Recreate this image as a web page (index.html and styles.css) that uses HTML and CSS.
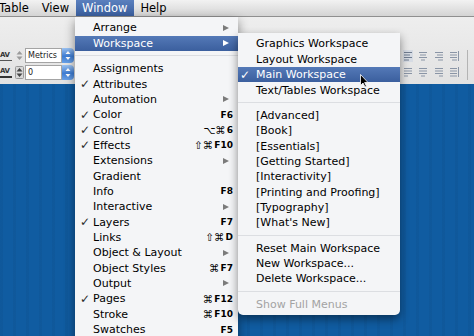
FILE: index.html
```html
<!DOCTYPE html>
<html>
<head>
<meta charset="utf-8">
<link rel="stylesheet" href="styles.css">
</head>
<body>
<div class="screen">
  <div class="menubar">
    <span class="mb-item first">Table</span>
    <span class="mb-item">View</span>
    <span class="mb-item active">Window</span>
    <span class="mb-item">Help</span>
  </div>
  <div class="toolbar">
    <div class="tb-left">
      <div class="tb-row">
        <span class="ico kern">AV</span>
        <svg class="stepper" width="9" height="13" viewBox="0 0 9 13"><path d="M4.5 2 L7.5 5.5 H1.5Z M4.5 11 L7.5 7.5 H1.5Z" fill="#9a9a9a"/></svg>
        <span class="field">Metrics</span>
        <span class="popbtn"><svg width="12" height="15" viewBox="0 0 12 15"><path d="M6 3 L8.5 6 H3.5Z M6 12 L8.5 9 H3.5Z" fill="#fff"/></svg></span>
      </div>
      <div class="tb-row">
        <span class="ico track">AV</span>
        <svg class="stepper dark" width="9" height="13" viewBox="0 0 9 13"><rect x="0.5" y="0.5" width="8" height="12" rx="1" fill="#d8d8d8" stroke="#999"/><path d="M4.5 2 L7.5 5.5 H1.5Z M4.5 11 L7.5 7.5 H1.5Z" fill="#444"/></svg>
        <span class="field">0</span>
        <span class="popbtn"><svg width="12" height="15" viewBox="0 0 12 15"><path d="M6 3 L8.5 6 H3.5Z M6 12 L8.5 9 H3.5Z" fill="#fff"/></svg></span>
      </div>
    </div>
    <div class="tb-right">
      <div class="align-grid">
        <svg viewBox="0 0 10 12"><rect x="0" y="0" width="10" height="12" fill="#d6dbe3"/><path d="M1 2.5H9M1 5H7M1 7.5H9M1 10H6" stroke="#6f7c90"/></svg>
        <svg viewBox="0 0 10 12"><path d="M1 2.5H9M2 5H8M1 7.5H9M3 10H7" stroke="#8a95a6"/></svg>
        <svg viewBox="0 0 10 12"><path d="M1 2.5H9M3 5H9M1 7.5H9M4 10H9" stroke="#8a95a6"/></svg>
        <svg viewBox="0 0 10 12"><path d="M1 2.5H8M1 5H8M1 7.5H8M3 10H8M9.5 1V11" stroke="#8a95a6"/></svg>
        <svg viewBox="0 0 10 12"><path d="M1 2.5H9M1 5H9M1 7.5H9M1 10H5" stroke="#8a95a6"/></svg>
        <svg viewBox="0 0 10 12"><path d="M1 2.5H9M1 5H9M1 7.5H9M3 10H7" stroke="#8a95a6"/></svg>
        <svg viewBox="0 0 10 12"><path d="M1 2.5H9M1 5H9M1 7.5H9M5 10H9" stroke="#8a95a6"/></svg>
        <svg viewBox="0 0 10 12"><path d="M1 2.5H8M1 5H8M1 7.5H8M1 10H8M9.5 1V11" stroke="#8a95a6"/></svg>
      </div>
      <span class="vsep"></span>
    </div>
  </div>
  <div class="desktop"></div>

  <div class="menu window-menu">
    <div class="mi"><span class="chk"></span><span class="lbl">Arrange</span><span class="arr"></span></div>
    <div class="mi hl"><span class="chk"></span><span class="lbl">Workspace</span><span class="arr"></span></div>
    <div class="sep"></div>
    <div class="mi"><span class="chk"></span><span class="lbl">Assignments</span></div>
    <div class="mi"><span class="chk">✓</span><span class="lbl">Attributes</span></div>
    <div class="mi"><span class="chk"></span><span class="lbl">Automation</span><span class="arr"></span></div>
    <div class="mi"><span class="chk">✓</span><span class="lbl">Color</span><span class="sc">F6</span></div>
    <div class="mi"><span class="chk">✓</span><span class="lbl">Control</span><span class="sc"><span class="mod">⌥⌘</span>6</span></div>
    <div class="mi"><span class="chk">✓</span><span class="lbl">Effects</span><span class="sc"><span class="mod">⇧⌘</span>F10</span></div>
    <div class="mi"><span class="chk"></span><span class="lbl">Extensions</span><span class="arr"></span></div>
    <div class="mi"><span class="chk"></span><span class="lbl">Gradient</span></div>
    <div class="mi"><span class="chk"></span><span class="lbl">Info</span><span class="sc">F8</span></div>
    <div class="mi"><span class="chk"></span><span class="lbl">Interactive</span><span class="arr"></span></div>
    <div class="mi"><span class="chk">✓</span><span class="lbl">Layers</span><span class="sc">F7</span></div>
    <div class="mi"><span class="chk"></span><span class="lbl">Links</span><span class="sc"><span class="mod">⇧⌘</span>D</span></div>
    <div class="mi"><span class="chk"></span><span class="lbl">Object &amp; Layout</span><span class="arr"></span></div>
    <div class="mi"><span class="chk"></span><span class="lbl">Object Styles</span><span class="sc"><span class="mod">⌘</span>F7</span></div>
    <div class="mi"><span class="chk"></span><span class="lbl">Output</span><span class="arr"></span></div>
    <div class="mi"><span class="chk">✓</span><span class="lbl">Pages</span><span class="sc"><span class="mod">⌘</span>F12</span></div>
    <div class="mi"><span class="chk"></span><span class="lbl">Stroke</span><span class="sc"><span class="mod">⌘</span>F10</span></div>
    <div class="mi"><span class="chk"></span><span class="lbl">Swatches</span><span class="sc">F5</span></div>
  </div>

  <div class="menu sub-menu">
    <div class="mi"><span class="chk"></span><span class="lbl">Graphics Workspace</span></div>
    <div class="mi"><span class="chk"></span><span class="lbl">Layout Workspace</span></div>
    <div class="mi hl"><span class="chk">✓</span><span class="lbl">Main Workspace</span></div>
    <div class="mi"><span class="chk"></span><span class="lbl">Text/Tables Workspace</span></div>
    <div class="sep"></div>
    <div class="mi"><span class="chk"></span><span class="lbl">[Advanced]</span></div>
    <div class="mi"><span class="chk"></span><span class="lbl">[Book]</span></div>
    <div class="mi"><span class="chk"></span><span class="lbl">[Essentials]</span></div>
    <div class="mi"><span class="chk"></span><span class="lbl">[Getting Started]</span></div>
    <div class="mi"><span class="chk"></span><span class="lbl">[Interactivity]</span></div>
    <div class="mi"><span class="chk"></span><span class="lbl">[Printing and Proofing]</span></div>
    <div class="mi"><span class="chk"></span><span class="lbl">[Typography]</span></div>
    <div class="mi"><span class="chk"></span><span class="lbl">[What's New]</span></div>
    <div class="sep"></div>
    <div class="mi"><span class="chk"></span><span class="lbl">Reset Main Workspace</span></div>
    <div class="mi"><span class="chk"></span><span class="lbl">New Workspace...</span></div>
    <div class="mi"><span class="chk"></span><span class="lbl">Delete Workspace...</span></div>
    <div class="sep"></div>
    <div class="mi dis"><span class="chk"></span><span class="lbl">Show Full Menus</span></div>
  </div>

  <svg class="cursor" width="9" height="14" viewBox="0 0 9 14"><path d="M0.5 0.5 V11.5 L3 9 L5 13 L6.5 12.3 L4.6 8.5 H8 Z" fill="#000" stroke="#fff" stroke-width="0.8"/></svg>
</div>
</body>
</html>
```

FILE: styles.css
```css
html, body {
  margin: 0;
  padding: 0;
}

body {
  font-family: "DejaVu Sans", "Liberation Sans", sans-serif;
}

.screen {
  position: relative;
  width: 474px;
  height: 336px;
  overflow: hidden;
  display: flex;
  flex-direction: column;
  background: #115ca0;
}

/* ---------- menubar ---------- */
.menubar {
  height: 16px;
  flex: none;
  display: flex;
  border-bottom: 1px solid #8f8f8f;
  background: linear-gradient(#f2f2f2, #d4d4d4);
  font-size: 11.5px;
  color: #000;
}

.mb-item {
  padding: 0 6.5px;
  line-height: 16px;
}

.mb-item.first {
  margin-left: -7.5px;
}

.mb-item.active {
  background: linear-gradient(#5b80be, #3a5f9f);
  color: #fff;
}

/* ---------- control panel ---------- */
.toolbar {
  height: 67px;
  flex: none;
  display: flex;
  justify-content: space-between;
  background: linear-gradient(#eeeeee, #e2e2e2);
}

.tb-left {
  padding-top: 31px;
  display: flex;
  flex-direction: column;
  gap: 2px;
}

.tb-row {
  display: flex;
  align-items: center;
  height: 15px;
}

.ico {
  width: 12px;
  font-size: 7px;
  font-weight: bold;
  color: #333;
  letter-spacing: -0.5px;
  line-height: 9px;
}

.ico.kern {
  border-bottom: 1px solid #555;
}

.ico.track {
  border-bottom: 2px solid #333;
}

.stepper {
  margin-left: 3px;
  flex: none;
}

.field {
  width: 33px;
  height: 13px;
  margin-left: 1px;
  padding-left: 2px;
  border: 1px solid #a4a4a4;
  background: #fff;
  font-size: 8px;
  line-height: 13px;
  color: #222;
}

.popbtn {
  width: 12px;
  height: 15px;
  display: flex;
  border-radius: 0 4px 4px 0;
  background: linear-gradient(#9cc3f2, #3e7dd4 55%, #6aa2e8);
}

.tb-right {
  padding-top: 33px;
  padding-right: 6px;
  display: flex;
  align-items: flex-start;
}

.align-grid {
  display: grid;
  grid-template-columns: repeat(4, 10px);
  grid-auto-rows: 12px;
  column-gap: 5.5px;
  row-gap: 4px;
}

.align-grid svg {
  width: 10px;
  height: 12px;
}

.vsep {
  width: 1px;
  height: 30px;
  margin-left: 8px;
  background: #b4b4b4;
}

/* ---------- desktop ---------- */
.desktop {
  flex: 1;
  background:
    repeating-linear-gradient(90deg, rgba(0, 0, 0, 0.04) 0 3px, transparent 3px 13px),
    #105ca1;
}

/* ---------- menus ---------- */
.menu {
  position: absolute;
  background: #f4f5f7;
  box-shadow: 0 4px 10px rgba(0, 0, 0, 0.45);
  font-size: 11px;
  color: #000;
}

.window-menu {
  left: 75px;
  top: 17px;
  width: 163px;
  padding-top: 3.3px;
  height: 340px;
}

.sub-menu {
  left: 238px;
  top: 33px;
  width: 162px;
  padding: 3.3px 0;
  border-radius: 0 0 5px 5px;
}

.mi {
  height: 15.35px;
  display: flex;
  align-items: center;
  padding-right: 9px;
  white-space: nowrap;
}

.chk {
  flex: none;
  width: 18px;
  padding-left: 5px;
  box-sizing: border-box;
  font-size: 12px;
  line-height: 12px;
  color: #2a2a2a;
}

.sub-menu .chk {
  padding-left: 2px;
}

.lbl {
  flex: 1;
}

.sc {
  font-size: 9px;
  font-weight: bold;
  margin-right: -4px;
  display: flex;
  align-items: center;
}

.mod {
  font-size: 10.5px;
  font-weight: normal;
  margin-right: 1px;
}

.arr {
  width: 0;
  height: 0;
  border-left: 6px solid #7b7b7b;
  border-top: 3.5px solid transparent;
  border-bottom: 3.5px solid transparent;
}

.mi.hl {
  background: linear-gradient(#5479b7, #3b5f9e);
  color: #fff;
}

.mi.hl .chk {
  color: #fff;
}

.mi.hl .arr {
  border-left-color: #fff;
}

.mi.dis {
  color: #a3a3a3;
}

.sep {
  height: 10px;
  display: flex;
  align-items: center;
}

.sep::before {
  content: "";
  flex: 1;
  height: 1px;
  background: #dcdee2;
}

.cursor {
  position: absolute;
  left: 360px;
  top: 74px;
}
```
